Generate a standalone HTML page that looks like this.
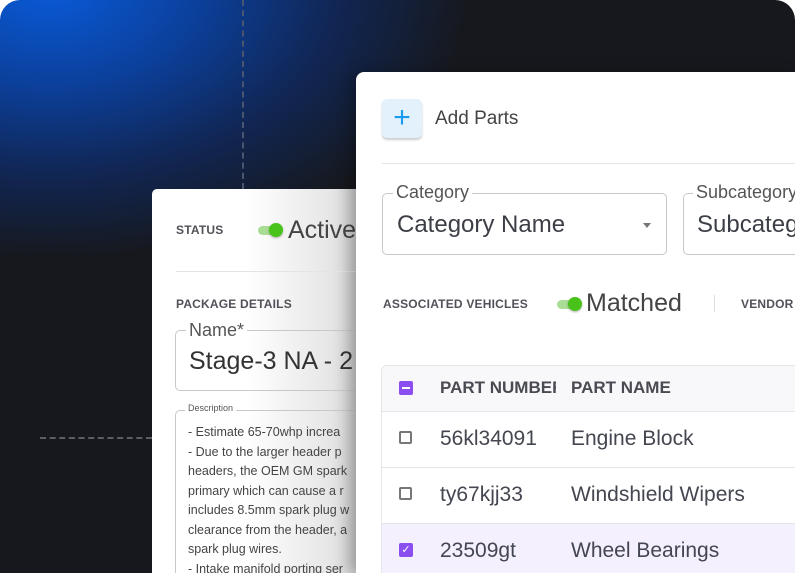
<!DOCTYPE html>
<html><head><style>
*{margin:0;padding:0;box-sizing:border-box}
html,body{width:795px;height:573px;overflow:hidden}
body{position:relative;background:#fff;font-family:"Liberation Sans",sans-serif;}
.bg{position:absolute;left:0;top:0;width:795px;height:573px;border-radius:20px 20px 0 0;overflow:hidden;
background:radial-gradient(ellipse 420px 270px at 50px -10px,#0a5ad8 0%,#0b409c 35%,#112654 68%,#16181d 100%),#16181d;}
.vd{position:absolute;left:242px;top:0;height:189px;border-left:2px dashed #4a5570}
.hd{position:absolute;left:40px;top:437px;width:112px;border-top:2px dashed #5a5e68}
.back{position:absolute;left:152px;top:189px;width:210px;height:384px;border-radius:5px 0 0 0;
background:linear-gradient(90deg,#fff 0%,#fff 45%,#e6e6e6 85%,#c9c9c9 100%);overflow:hidden;color:#3a3b40}
.lbl{font-size:12px;font-weight:bold;color:#505258;letter-spacing:.2px}
.front{position:absolute;left:356px;top:72px;width:439px;height:501px;background:#fff;border-radius:8px 0 0 0;box-shadow:-6px 0 14px rgba(0,0,0,.25);color:#3d3f47;overflow:hidden}
.tog{position:absolute;width:22px;height:9px;border-radius:5px;background:#a9dd96}
.tog::after{content:"";position:absolute;right:-3px;top:-3px;width:14px;height:14px;border-radius:50%;background:#49c21a;box-shadow:0 1px 2px rgba(0,0,0,.3)}
.fs{position:absolute;border:1px solid #c8c8cc;border-radius:5px}
.leg{position:absolute;background:#fff;padding:0 3px;color:#555}
.cb{position:absolute;left:17px;width:13px;height:13px;border:2px solid #777;border-radius:2px}
.t{position:absolute;font-size:21px;color:#444650}
</style></head><body>
<div class="bg"><div class="vd"></div><div class="hd"></div></div>
<div class="back">
  <div class="lbl" style="position:absolute;left:24px;top:34px">STATUS</div>
  <div class="tog" style="left:106px;top:37px"></div>
  <div style="position:absolute;left:136px;top:27px;font-size:25px;color:#444">Active</div>
  <div style="position:absolute;left:24px;top:82px;width:200px;border-top:1px solid #e4e4e4"></div>
  <div class="lbl" style="position:absolute;left:24px;top:108px">PACKAGE DETAILS</div>
  <div class="fs" style="left:23px;top:141px;width:220px;height:61px"></div>
  <div class="leg" style="left:34px;top:131px;font-size:18px">Name*</div>
  <div style="position:absolute;left:37px;top:158px;font-size:25px;color:#333">Stage-3 NA - 2</div>
  <div class="fs" style="left:23px;top:221px;width:220px;height:180px"></div>
  <div class="leg" style="left:33px;top:214px;font-size:9px">Description</div>
  <div style="position:absolute;left:36px;top:234px;height:150px;overflow:hidden;font-size:12.5px;line-height:19.5px;color:#444;white-space:nowrap">- Estimate 65-70whp increa<br>- Due to the larger header p<br>headers, the OEM GM spark<br>primary which can cause a r<br>includes 8.5mm spark plug w<br>clearance from the header, a<br>spark plug wires.<br>- Intake manifold porting ser</div>
</div>
<div class="front">
  <div style="position:absolute;left:26px;top:27px;width:40px;height:39px;border-radius:5px;background:#e3f1fd;box-shadow:0 2px 2px rgba(0,0,0,.2);color:#1a9df0;font-size:30px;line-height:37px;text-align:center">+</div>
  <div style="position:absolute;left:79px;top:36px;font-size:19px;color:#444">Add Parts</div>
  <div style="position:absolute;left:26px;top:91px;width:413px;border-top:1px solid #e6e6e6"></div>
  <div class="fs" style="left:26px;top:121px;width:285px;height:62px"></div>
  <div class="leg" style="left:37px;top:110px;font-size:18px">Category</div>
  <div style="position:absolute;left:41px;top:139px;font-size:24px;color:#3d3f47">Category Name</div>
  <div style="position:absolute;left:287px;top:151px;border:4px solid transparent;border-top:5px solid #777"></div>
  <div class="fs" style="left:327px;top:121px;width:130px;height:62px;border-right:none"></div>
  <div class="leg" style="left:337px;top:110px;font-size:18px">Subcategory</div>
  <div style="position:absolute;left:341px;top:139px;font-size:24px;color:#3d3f47;white-space:nowrap">Subcateg</div>
  <div class="lbl" style="position:absolute;left:27px;top:225px">ASSOCIATED VEHICLES</div>
  <div class="tog" style="left:201px;top:228px"></div>
  <div style="position:absolute;left:230px;top:217px;font-size:25px;color:#444">Matched</div>
  <div style="position:absolute;left:358px;top:223px;height:17px;border-left:1px solid #ddd"></div>
  <div class="lbl" style="position:absolute;left:385px;top:225px">VENDOR</div>
  <div style="position:absolute;left:25px;top:293px;width:420px;height:208px;border:1px solid #e6e6ea;border-right:none;border-bottom:none;border-radius:6px 0 0 0;overflow:hidden">
    <div style="position:absolute;left:0;top:0;width:420px;height:45px;background:#f8f8fb"></div>
    <div style="position:absolute;left:17px;top:15px;width:14px;height:14px;border-radius:2px;background:#8b4ef0"><div style="position:absolute;left:3px;top:6px;width:8px;height:2px;background:#fff"></div></div>
    <div style="position:absolute;left:58px;top:12px;font-size:17px;font-weight:bold;color:#4a4b52;width:116px;overflow:hidden;white-space:nowrap">PART NUMBER</div>
    <div style="position:absolute;left:189px;top:12px;font-size:17px;font-weight:bold;color:#4a4b52">PART NAME</div>
    <div style="position:absolute;left:0;top:45px;width:420px;border-top:1px solid #e6e6ea"></div>
    <div class="cb" style="top:65px"></div>
    <div class="t" style="left:58px;top:61px">56kl34091</div><div class="t" style="left:189px;top:61px">Engine Block</div>
    <div style="position:absolute;left:0;top:101px;width:420px;border-top:1px solid #e6e6ea"></div>
    <div class="cb" style="top:121px"></div>
    <div class="t" style="left:58px;top:117px">ty67kjj33</div><div class="t" style="left:189px;top:117px">Windshield Wipers</div>
    <div style="position:absolute;left:0;top:157px;width:420px;height:51px;background:#f4f0fe;border-top:1px solid #e6e6ea"></div>
    <div style="position:absolute;left:17px;top:177px;width:14px;height:14px;border-radius:2px;background:#8b4ef0;color:#fff;font-size:11px;line-height:14px;text-align:center">✓</div>
    <div class="t" style="left:58px;top:173px">23509gt</div><div class="t" style="left:189px;top:173px">Wheel Bearings</div>
  </div>
</div>
</body></html>
